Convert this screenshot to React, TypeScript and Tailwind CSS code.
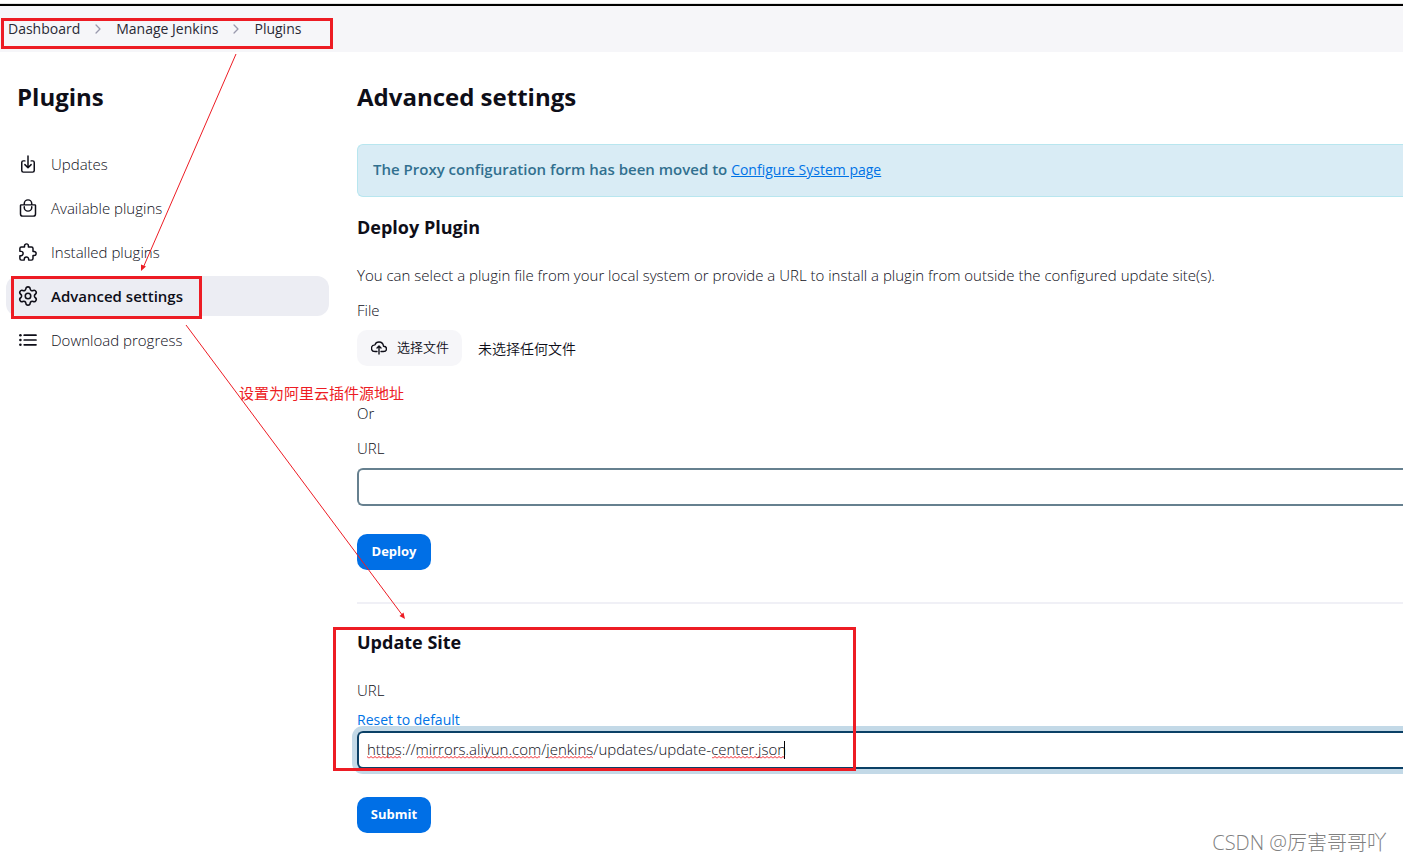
import type { ReactNode } from "react";
import { Settings } from "lucide-react";
import {
  IoBagHandleOutline,
  IoChevronForward,
  IoCloudUploadOutline,
  IoDownloadOutline,
  IoExtensionPuzzleOutline,
} from "react-icons/io5";

const crumbs = ["Dashboard", "Manage Jenkins", "Plugins"];

function ListIcon() {
  return (
    <svg viewBox="0 0 20 20" className="size-5" aria-hidden="true">
      <g fill="currentColor">
        <circle cx="2.4" cy="5.2" r="1.3" />
        <circle cx="2.4" cy="10" r="1.3" />
        <circle cx="2.4" cy="14.8" r="1.3" />
      </g>
      <path d="M6.2 5.2H18M6.2 10H18M6.2 14.8H18" stroke="currentColor" strokeWidth="1.7" strokeLinecap="round" />
    </svg>
  );
}

const tasks: { label: string; icon: ReactNode; active?: boolean }[] = [
  { label: "Updates", icon: <IoDownloadOutline className="size-5 [&_*]:[stroke-width:38px]" /> },
  { label: "Available plugins", icon: <IoBagHandleOutline className="size-5 [&_*]:[stroke-width:38px]" /> },
  { label: "Installed plugins", icon: <IoExtensionPuzzleOutline className="size-5 [&_*]:[stroke-width:38px]" /> },
  { label: "Advanced settings", icon: <Settings className="size-[22px] shrink-0" strokeWidth={1.7} />, active: true },
  { label: "Download progress", icon: <ListIcon /> },
];

function Breadcrumbs() {
  return (
    <nav aria-label="Breadcrumb" className="h-[46px] bg-[#f6f6f9] pl-2 pt-3 text-[14px] font-normal text-[#2a2a35]">
      <ol className="flex items-center">
        {crumbs.map((crumb, i) => (
          <li key={crumb} className="flex items-center">
            {i > 0 && <IoChevronForward className="mx-[11px] size-[14px] text-[#9a9aad]" />}
            <a href="#" className="leading-[22px]">{crumb}</a>
          </li>
        ))}
      </ol>
    </nav>
  );
}

function Sidebar() {
  return (
    <aside className="w-[329px] shrink-0 pl-[6px]">
      <h1 className="pl-[11px] text-[24px] font-bold leading-9">Plugins</h1>
      <ul className="mt-[29px] flex flex-col gap-1">
        {tasks.map((task) => (
          <li key={task.label}>
            <a
              href="#"
              className={
                task.active
                  ? "flex h-10 items-center gap-3 rounded-xl bg-[#ecedf3] pl-[11px] font-semibold"
                  : "flex h-10 items-center gap-3 rounded-xl pl-[11px]"
              }
            >
              <span className="flex w-[22px] justify-center">{task.icon}</span>
              {task.label}
            </a>
          </li>
        ))}
      </ul>
    </aside>
  );
}

function Main() {
  return (
    <main className="ml-7 min-w-0 grow">
      <h1 className="text-[24px] font-bold leading-9">Advanced settings</h1>
      <div className="mt-[29px] rounded-l-md border border-r-0 border-[#b8e6ef] bg-[#d9ecf5] px-[15px] pb-4 pt-[14px] leading-[21px] text-[#31708f]">
        <strong className="font-semibold">The Proxy configuration form has been moved to </strong>
        <a href="#" className="text-[14px] font-normal text-[#0073e6] underline">Configure System page</a>
      </div>
      <form>
        <h2 className="mt-4 text-[18px] font-bold leading-7">Deploy Plugin</h2>
        <p className="mt-6 leading-[21px]">
          You can select a plugin file from your local system or provide a URL to install a plugin from outside the
          configured update site(s).
        </p>
        <p className="mt-[14px] leading-[21px]">File</p>
        <div className="mt-[9px] flex items-center gap-4 font-[350]">
          <button type="button" className="flex h-9 items-center gap-[9px] rounded-[10px] bg-[#f6f6f9] px-[13px] text-[13px]">
            <span className="flex w-[18px] justify-center">
              <IoCloudUploadOutline className="size-4 [&_*]:[stroke-width:44px]" />
            </span>
            选择文件
          </button>
          <span className="text-[14px]">未选择任何文件</span>
        </div>
        <p className="mt-[37px] leading-[21px]">Or</p>
        <label htmlFor="plugin-url" className="mt-[14px] block leading-[21px]">URL</label>
        <input
          id="plugin-url"
          type="text"
          className="mt-[9px] block h-[38px] w-full rounded-l-md border-2 border-r-0 border-[#66808f] px-2 outline-none"
        />
        <button type="button" className="mt-7 block h-9 w-[74px] rounded-[10px] bg-[#006fe6] text-[13px] font-bold text-white">
          Deploy
        </button>
      </form>
      <hr className="mt-8 border-t-2 border-[#f0f0f6]" />
      <form>
        <h2 className="mt-6 text-[18px] font-bold leading-7">Update Site</h2>
        <label htmlFor="site-url" className="mt-6 block leading-[21px]">URL</label>
        <a href="#" className="mt-2 block text-[14px] font-normal leading-[21px] text-[#0073e6]">Reset to default</a>
        <div className="relative mt-px">
          <input
            id="site-url"
            type="text"
            spellCheck={false}
            defaultValue="https://mirrors.aliyun.com/jenkins/updates/update-center.json"
            className="block h-[38px] w-full rounded-l-md border-2 border-r-0 border-[#0b4066] px-2 pb-[2px] shadow-[0_0_0_5px_#c3d9e7] outline-none"
          />
          <SpellMarks />
        </div>
        <button type="button" className="mt-7 block h-9 w-[74px] rounded-[10px] bg-[#006fe6] text-[13px] font-bold text-white">
          Submit
        </button>
      </form>
    </main>
  );
}

/* Spelling squiggles and the text caret of the focused field. */
function SpellMarks() {
  const marks = [
    [10, 44],
    [60, 183],
    [191, 236],
    [355, 427],
  ];
  return (
    <svg className="pointer-events-none absolute left-0 top-0" width="440" height="38" aria-hidden="true">
      <defs>
        <pattern id="squiggle" width="4" height="3" patternUnits="userSpaceOnUse" y="25">
          <path d="M0 2.4 L2 0.4 L4 2.4" fill="none" stroke="#f01820" />
        </pattern>
      </defs>
      {marks.map(([from, to]) => (
        <rect key={from} x={from} y="25" width={to - from} height="3" fill="url(#squiggle)" />
      ))}
      <rect x="427" y="10" width="1" height="18" fill="#000" />
    </svg>
  );
}

function Annotations() {
  return (
    <div className="pointer-events-none absolute inset-0">
      <svg className="absolute left-0 top-0" width="860" height="780" aria-hidden="true">
        <g fill="none" stroke="#ed1c24" strokeWidth="3">
          <rect x="2.5" y="19.5" width="329" height="28" />
          <rect x="12.5" y="277.5" width="188" height="40" />
          <rect x="334.5" y="628.5" width="520" height="141" />
        </g>
        <g stroke="#ed1c24" strokeWidth="1">
          <path d="M236 54 L143 268" />
          <path d="M186 325 L403 616" />
        </g>
        <g fill="#ed1c24">
          <path d="M141 271 L141 264.5 L146 266.5 Z" />
          <path d="M405 619 L399.5 616 L403.5 612.5 Z" />
        </g>
      </svg>
      <p className="absolute left-[239px] top-[382px] text-[15px] font-normal leading-[22px] text-[#ed1c24]">
        设置为阿里云插件源地址
      </p>
      <p className="absolute right-4 top-[829px] text-[20px] leading-7 text-[#808080]">CSDN @厉害哥哥吖</p>
    </div>
  );
}

export default function App() {
  return (
    <div className="relative min-h-screen overflow-hidden bg-white font-['Open_Sans','Noto_Sans_CJK_SC',sans-serif] text-[15px] font-light text-[#0e0e18]">
      <header>
        <div className="h-1 border-b border-[#e4e4e4] bg-white" />
        <div className="h-[2px] bg-black" />
        <Breadcrumbs />
      </header>
      <div className="flex pt-[27px]">
        <Sidebar />
        <Main />
      </div>
      <Annotations />
    </div>
  );
}
